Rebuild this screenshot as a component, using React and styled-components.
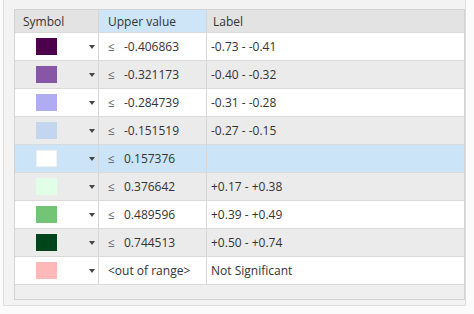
import styled, { createGlobalStyle } from 'styled-components';

const GlobalStyle = createGlobalStyle`
  html, body {
    margin: 0;
    padding: 0;
    background: #fbfbfb;
  }
  body {
    font-family: "Open Sans", "Noto Sans", sans-serif;
    font-size: 12px;
    color: #333;
  }
`;

const Panel = styled.div`
  margin-left: 3px;
  width: 463px;
  height: 306px;
  box-sizing: border-box;
  padding: 9px 1px 0 10px;
  background: #f3f3f3;
  border-left: 1px solid #dedede;
  border-right: 1px solid #dedede;
  border-bottom: 1px solid #dedede;
`;

const Table = styled.div`
  width: 451px;
  box-sizing: border-box;
  border: 1px solid #d3d3d3;
  background: #efefef;
  padding-bottom: 14px;
`;

const Row = styled.div`
  display: grid;
  grid-template-columns: 84px 108px 1fr;
  height: ${(p) => (p.$header ? '23px' : '28px')};
  box-sizing: border-box;
  border-bottom: 1px solid #dadada;
  background: ${(p) =>
    p.$header ? '#e3e3e3' : p.$selected ? '#cce4f7' : p.$odd ? '#ebebeb' : '#ffffff'};
`;

const Cell = styled.div`
  display: flex;
  align-items: center;
  padding-left: ${(p) => p.$pad || 6}px;
  border-right: 1px solid #d6d6d6;
  background: ${(p) => (p.$active ? '#cde5f7' : 'transparent')};
  white-space: nowrap;
  &:last-child {
    border-right: none;
  }
`;

const SymbolCell = styled.div`
  display: flex;
  align-items: center;
  border-right: 1px solid #d6d6d6;
  padding-left: 21px;
`;

const Swatch = styled.span`
  width: 21px;
  height: 17px;
  background: ${(p) => p.$color};
  box-shadow: ${(p) => (p.$color === '#ffffff' ? 'inset 0 0 0 1px #f0f0f0' : 'none')};
`;

const Caret = styled.span`
  margin-left: 32px;
  width: 0;
  height: 0;
  border-left: 3px solid transparent;
  border-right: 3px solid transparent;
  border-top: 4px solid #444;
`;

const Le = styled.span`
  width: 16px;
  color: #555;
`;

const rows = [
  { color: '#4d004b', value: '-0.406863', label: '-0.73 - -0.41' },
  { color: '#8856a7', value: '-0.321173', label: '-0.40 - -0.32' },
  { color: '#b0acf1', value: '-0.284739', label: '-0.31 - -0.28' },
  { color: '#c3d5ef', value: '-0.151519', label: '-0.27 - -0.15' },
  { color: '#ffffff', value: '0.157376', label: '', selected: true },
  { color: '#e0ffe6', value: '0.376642', label: '+0.17 - +0.38' },
  { color: '#74c476', value: '0.489596', label: '+0.39 - +0.49' },
  { color: '#00441b', value: '0.744513', label: '+0.50 - +0.74' },
  { color: '#ffb8b8', value: null, label: 'Not Significant' },
];

export default function App() {
  return (
    <>
      <GlobalStyle />
      <Panel>
        <Table>
          <Row $header>
            <Cell $pad={8}>Symbol</Cell>
            <Cell $pad={9} $active>Upper value</Cell>
            <Cell $pad={6}>Label</Cell>
          </Row>
          {rows.map((r, i) => (
            <Row key={i} $odd={i % 2 === 1} $selected={r.selected}>
              <SymbolCell>
                <Swatch $color={r.color} />
                <Caret />
              </SymbolCell>
              <Cell $pad={9}>
                {r.value ? (
                  <>
                    <Le>≤</Le>
                    {r.value}
                  </>
                ) : (
                  '<out of range>'
                )}
              </Cell>
              <Cell $pad={4}>{r.label}</Cell>
            </Row>
          ))}
        </Table>
      </Panel>
    </>
  );
}
